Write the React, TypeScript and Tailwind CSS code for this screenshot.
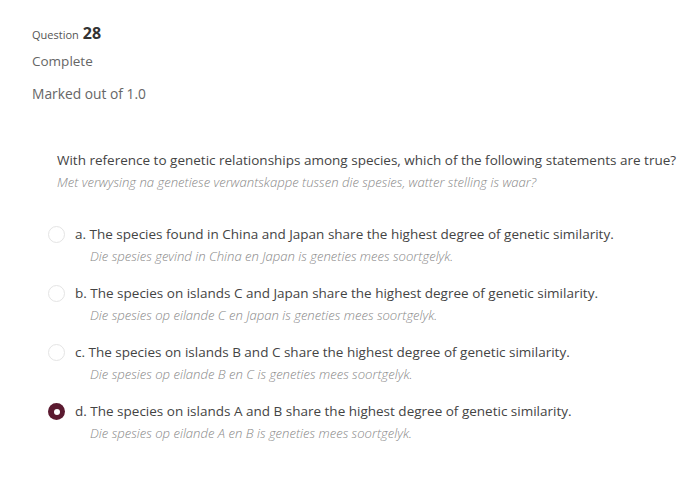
import React from 'react';

const options = [
  {
    label: 'a. The species found in China and Japan share the highest degree of genetic similarity.',
    af: 'Die spesies gevind in China en Japan is geneties mees soortgelyk.',
    checked: false,
  },
  {
    label: 'b. The species on islands C and Japan share the highest degree of genetic similarity.',
    af: 'Die spesies op eilande C en Japan is geneties mees soortgelyk.',
    checked: false,
  },
  {
    label: 'c. The species on islands B and C share the highest degree of genetic similarity.',
    af: 'Die spesies op eilande B en C is geneties mees soortgelyk.',
    checked: false,
  },
  {
    label: 'd. The species on islands A and B share the highest degree of genetic similarity.',
    af: 'Die spesies op eilande A en B is geneties mees soortgelyk.',
    checked: true,
  },
];

export default function App() {
  return (
    <div
      className="w-[700px] h-[498px] bg-white text-[#4a4a4a] overflow-hidden"
      style={{ fontFamily: '"Open Sans", sans-serif' }}
    >
      {/* Question info */}
      <div className="pl-[32px] pt-[23px]">
        <div className="flex items-baseline gap-[4px] leading-[20px]">
          <span className="text-[11px] text-[#555]">Question</span>
          <span className="text-[16px] font-bold text-[#333]">28</span>
        </div>
        <div className="mt-[6px] text-[13.5px] text-[#666] leading-[20px]">Complete</div>
        <div className="mt-[13px] text-[13.8px] text-[#666] leading-[20px]">Marked out of 1.0</div>
      </div>

      {/* Question text */}
      <div className="pl-[57px] pt-[46px]">
        <p className="text-[13.5px] leading-[20px] text-[#444] whitespace-nowrap">
          With reference to genetic relationships among species, which of the following statements are true?
        </p>
        <p className="mt-[2px] text-[13.1px] italic font-light leading-[20px] text-[#888] whitespace-nowrap">
          Met verwysing na genetiese verwantskappe tussen die spesies, watter stelling is waar?
        </p>
      </div>

      {/* Answers */}
      <div className="pl-[48px] pt-[32px] flex flex-col gap-[17px]">
        {options.map((o) => (
          <div key={o.label} className="flex items-start">
            <div className="pt-[2px]">
              {o.checked ? (
                <div className="w-[17px] h-[17px] rounded-full bg-[#5b1a30] flex items-center justify-center">
                  <div className="w-[6px] h-[6px] rounded-full bg-white" />
                </div>
              ) : (
                <div className="w-[17px] h-[17px] rounded-full border border-[#e4e4e4] bg-white" />
              )}
            </div>
            <div className="ml-[10px]">
              <p className="text-[13.5px] leading-[20px] text-[#444] whitespace-nowrap">{o.label}</p>
              <p className="pl-[15px] mt-[2px] text-[13.1px] italic font-light leading-[20px] text-[#888] whitespace-nowrap">
                {o.af}
              </p>
            </div>
          </div>
        ))}
      </div>
    </div>
  );
}
